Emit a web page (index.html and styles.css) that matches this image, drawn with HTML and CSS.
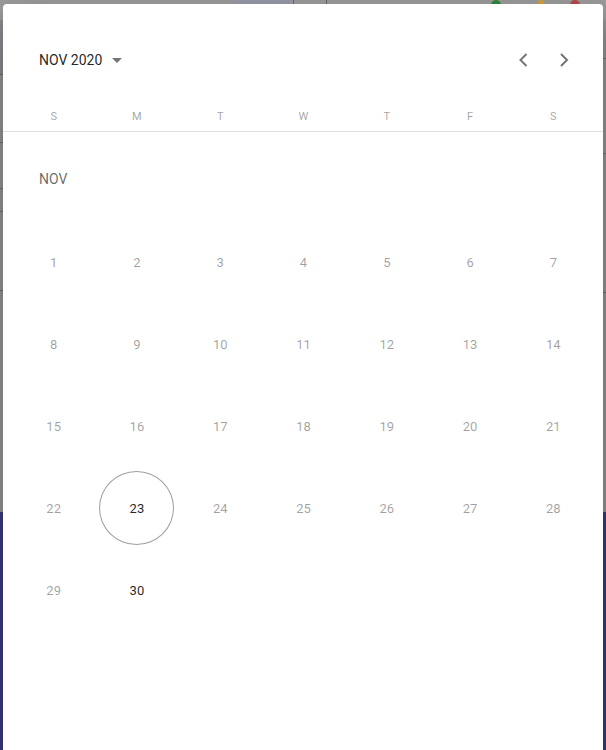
FILE: index.html
```html
<!DOCTYPE html>
<html lang="en">
<head>
<meta charset="utf-8">
<title>Datepicker</title>
<link rel="stylesheet" href="styles.css">
</head>
<body>
<div class="page">
  <div class="topbar">
    <div class="tb-seg tb-a"></div>
    <div class="tb-seg tb-b"></div>
    <div class="tb-seg tb-c"></div>
    <div class="tb-seg tb-d">
      <span class="dot dot-green"></span>
      <span class="dot dot-orange"></span>
      <span class="dot dot-red"></span>
    </div>
  </div>
  <div class="cols">
    <div class="col">
      <div class="band" style="height:54px"></div>
      <div class="band" style="height:67px"></div>
      <div class="band" style="height:45px"></div>
      <div class="band" style="height:22px"></div>
      <div class="band" style="height:78px"></div>
      <div class="band last" style="height:221px"></div>
      <div class="blue"></div>
    </div>
    <div class="col">
      <div class="band" style="height:38px"></div>
      <div class="band" style="height:94px"></div>
      <div class="band" style="height:138px"></div>
      <div class="band last" style="height:219px"></div>
      <div class="blue"></div>
    </div>
  </div>
</div>

<div class="dialog">
  <div class="controls">
    <div class="period">NOV 2020<span class="caret"></span></div>
    <div class="spacer"></div>
    <div class="nav">
      <svg width="40" height="40" viewBox="0 0 40 40"><polyline points="22.5,14 16.5,20 22.5,26" fill="none" stroke="#757575" stroke-width="2"/></svg>
    </div>
    <div class="nav">
      <svg width="40" height="40" viewBox="0 0 40 40"><polyline points="17,14 23,20 17,26" fill="none" stroke="#757575" stroke-width="2"/></svg>
    </div>
  </div>
  <div class="weekdays">
    <span>S</span><span>M</span><span>T</span><span>W</span><span>T</span><span>F</span><span>S</span>
  </div>
  <div class="divider"></div>
  <div class="month-label">NOV</div>
  <div class="days">
    <span class="day">1</span><span class="day">2</span><span class="day">3</span><span class="day">4</span><span class="day">5</span><span class="day">6</span><span class="day">7</span>
    <span class="day">8</span><span class="day">9</span><span class="day">10</span><span class="day">11</span><span class="day">12</span><span class="day">13</span><span class="day">14</span>
    <span class="day">15</span><span class="day">16</span><span class="day">17</span><span class="day">18</span><span class="day">19</span><span class="day">20</span><span class="day">21</span>
    <span class="day">22</span><span class="day active"><span class="today">23</span></span><span class="day">24</span><span class="day">25</span><span class="day">26</span><span class="day">27</span><span class="day">28</span>
    <span class="day">29</span><span class="day active">30</span>
  </div>
</div>
</body>
</html>
```

FILE: styles.css
```css
html, body {
  margin: 0;
  padding: 0;
}
body {
  width: 606px;
  height: 750px;
  overflow: hidden;
  position: relative;
  font-family: Roboto, "Liberation Sans", Arial, sans-serif;
  background: #9b9b9b;
}

/* underlying page (dimmed by backdrop) */
.page {
  width: 606px;
  height: 750px;
  display: flex;
  flex-direction: column;
}
.topbar {
  height: 20px;
  display: flex;
  background: #9e9e9e;
}
.tb-seg {
  height: 20px;
}
.tb-a { width: 235px; }
.tb-b { width: 58px; background: #9b9cab; border-right: 1px solid #6c6c6c; }
.tb-c { width: 32px; border-right: 1px solid #6c6c6c; }
.tb-d {
  flex: 1;
  display: flex;
  align-items: flex-start;
  padding-left: 164px;
}
.dot {
  width: 10px;
  height: 10px;
  border-radius: 50%;
  display: block;
}
.dot-green { background: #2e8b3a; margin-right: 37px; }
.dot-orange { background: #d9a33a; width: 6px; height: 6px; margin-right: 26px; }
.dot-red { background: #b94a4a; }

.cols {
  flex: 1;
  display: grid;
  grid-template-columns: 303px 303px;
}
.col {
  display: flex;
  flex-direction: column;
}
.band {
  border-bottom: 1px solid #707070;
  background: #979797;
  flex: none;
}
.band.last {
  border-bottom: none;
}
.col:first-child .band:first-child {
  background: #8e8e94;
}
.blue {
  flex: 1;
  background: #3c3e82;
}

/* dialog */
.dialog {
  position: absolute;
  top: 4px;
  left: 3px;
  width: 600px;
  height: 780px;
  box-sizing: border-box;
  padding: 8px 8px 0;
  background: #fff;
  border-radius: 4px;
  box-shadow: 0 11px 15px -7px rgba(0,0,0,.2), 0 24px 38px 3px rgba(0,0,0,.14), 0 9px 46px 8px rgba(0,0,0,.12);
}
.controls {
  display: flex;
  align-items: center;
  height: 36px;
  margin: 30px 11.5px 32px;
}
.period {
  display: flex;
  align-items: center;
  padding: 0 16px 0 16.5px;
  font-size: 14px;
  font-weight: 400;
  color: rgba(0,0,0,.87);
  height: 36px;
}
.caret {
  width: 0;
  height: 0;
  border-left: 5px solid transparent;
  border-right: 5px solid transparent;
  border-top: 5px solid rgba(0,0,0,.54);
  margin-left: 10px;
}
.spacer {
  flex: 1;
}
.nav {
  width: 40px;
  height: 40px;
  display: flex;
}
.weekdays {
  display: grid;
  grid-template-columns: repeat(7, 1fr);
  padding-bottom: 7px;
  padding-left: 1px;
}
.weekdays span {
  text-align: center;
  font-size: 11px;
  line-height: 14px;
  font-weight: 400;
  color: rgba(0,0,0,.38);
}
.divider {
  height: 1px;
  background: rgba(0,0,0,.12);
  margin: 0 -8px;
}
.month-label {
  padding: 39px 0 34px 28px;
  font-size: 14px;
  line-height: 16px;
  font-weight: 400;
  color: rgba(0,0,0,.6);
}
.days {
  display: grid;
  grid-template-columns: repeat(7, 1fr);
  grid-auto-rows: 82px;
  padding-left: 1px;
}
.day {
  display: flex;
  align-items: center;
  justify-content: center;
  font-size: 13px;
  color: rgba(0,0,0,.38);
}
.day.active {
  color: rgba(0,0,0,.87);
}
.today {
  width: 75px;
  height: 74px;
  box-sizing: border-box;
  border: 1px solid rgba(0,0,0,.38);
  border-radius: 50%;
  display: flex;
  align-items: center;
  justify-content: center;
}
```
